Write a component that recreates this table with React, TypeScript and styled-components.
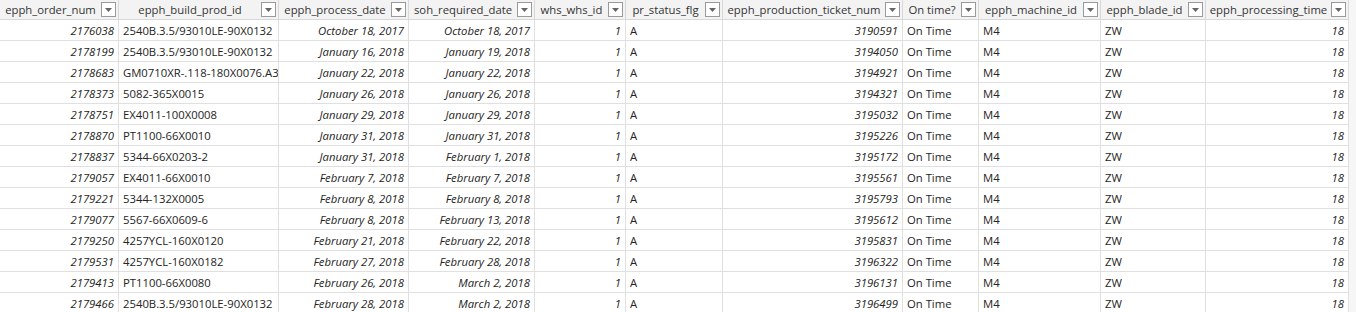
import React from "react";
import styled, { createGlobalStyle } from "styled-components";

const Global = createGlobalStyle`
  html, body { margin: 0; padding: 0; background: #f6f6f6; }
  body { font-family: "Open Sans", "Noto Sans", sans-serif; }
`;

type Col = { key: string; width: number; align: "left" | "right"; italic: boolean };

const cols: Col[] = [
  { key: "epph_order_num", width: 119, align: "right", italic: true },
  { key: "epph_build_prod_id", width: 160, align: "left", italic: false },
  { key: "epph_process_date", width: 130, align: "right", italic: true },
  { key: "soh_required_date", width: 126, align: "right", italic: true },
  { key: "whs_whs_id", width: 91, align: "right", italic: true },
  { key: "pr_status_flg", width: 97, align: "left", italic: false },
  { key: "epph_production_ticket_num", width: 180, align: "right", italic: true },
  { key: "On time?", width: 76, align: "left", italic: false },
  { key: "epph_machine_id", width: 122, align: "left", italic: false },
  { key: "epph_blade_id", width: 105, align: "left", italic: false },
  { key: "epph_processing_time", width: 143, align: "right", italic: true },
];

const raw: [string, string, string, string, string][] = [
  ["2176038", "2540B.3.5/93010LE-90X0132", "October 18, 2017", "October 18, 2017", "3190591"],
  ["2178199", "2540B.3.5/93010LE-90X0132", "January 16, 2018", "January 19, 2018", "3194050"],
  ["2178683", "GM0710XR-.118-180X0076.A3", "January 22, 2018", "January 22, 2018", "3194921"],
  ["2178373", "5082-365X0015", "January 26, 2018", "January 26, 2018", "3194321"],
  ["2178751", "EX4011-100X0008", "January 29, 2018", "January 29, 2018", "3195032"],
  ["2178870", "PT1100-66X0010", "January 31, 2018", "January 31, 2018", "3195226"],
  ["2178837", "5344-66X0203-2", "January 31, 2018", "February 1, 2018", "3195172"],
  ["2179057", "EX4011-66X0010", "February 7, 2018", "February 7, 2018", "3195561"],
  ["2179221", "5344-132X0005", "February 8, 2018", "February 8, 2018", "3195793"],
  ["2179077", "5567-66X0609-6", "February 8, 2018", "February 13, 2018", "3195612"],
  ["2179250", "4257YCL-160X0120", "February 21, 2018", "February 22, 2018", "3195831"],
  ["2179531", "4257YCL-160X0182", "February 27, 2018", "February 28, 2018", "3196322"],
  ["2179413", "PT1100-66X0080", "February 26, 2018", "March 2, 2018", "3196131"],
  ["2179466", "2540B.3.5/93010LE-90X0132", "February 28, 2018", "March 2, 2018", "3196499"],
];

const rows = raw.map((r) => [r[0], r[1], r[2], r[3], "1", "A", r[4], "On Time", "M4", "ZW", "18"]);

const template = cols.map((c) => `${c.width}px`).join(" ");

const Grid = styled.div`
  display: grid;
  grid-template-columns: ${template};
  width: 1349px;
  background: #ffffff;
  color: #252423;
  font-size: 11.3px;
`;

const HeadCell = styled.div`
  height: 19px;
  background: #f3f3f3;
  border-right: 1px solid #d8d8d8;
  border-bottom: 1px solid #d8d8d8;
  display: flex;
  align-items: center;
  padding-right: 2px;
  box-sizing: content-box;
  width: calc(100% - 3px);
`;

const HeadLabel = styled.span`
  flex: 1;
  text-align: center;
  white-space: nowrap;
  overflow: hidden;
  color: #333333;
  line-height: 19px;
`;

const FilterBox = styled.span`
  width: 13px;
  height: 13px;
  border: 1px solid #9a9a9a;
  background: #ffffff;
  display: flex;
  align-items: center;
  justify-content: center;
  flex: none;
`;

const Cell = styled.div<{ $align: "left" | "right"; $italic: boolean }>`
  height: 19px;
  padding: 1px 4px 0;
  line-height: 20px;
  border-right: 1px solid #e0e0e0;
  border-bottom: 1px solid #e0e0e0;
  text-align: ${(p) => p.$align};
  font-style: ${(p) => (p.$italic ? "italic" : "normal")};
  white-space: nowrap;
  overflow: hidden;
`;

const Caret = () => (
  <svg width="7" height="4" viewBox="0 0 7 4">
    <path d="M0 0 H7 L3.5 4 Z" fill="#666" />
  </svg>
);

export default function App() {
  return (
    <>
      <Global />
      <Grid>
        {cols.map((c) => (
          <HeadCell key={c.key}>
            <HeadLabel>{c.key}</HeadLabel>
            <FilterBox>
              <Caret />
            </FilterBox>
          </HeadCell>
        ))}
        {rows.map((r, i) =>
          r.map((v, j) => (
            <Cell key={`${i}-${j}`} $align={cols[j].align} $italic={cols[j].italic}>
              {v}
            </Cell>
          ))
        )}
      </Grid>
    </>
  );
}
